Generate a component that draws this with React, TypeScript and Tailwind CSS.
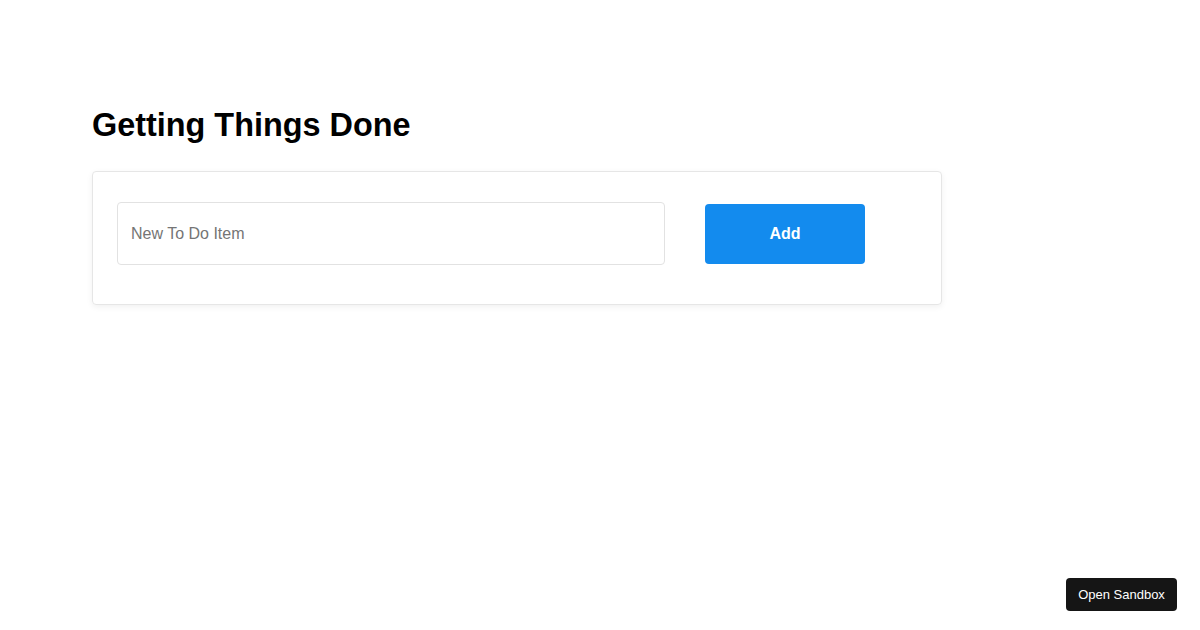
import React, { useState } from 'react';

export default function App() {
  const [item, setItem] = useState('');

  return (
    <div className="min-h-screen w-[1200px] h-[630px] bg-white relative" style={{ fontFamily: '"Liberation Sans", Arial, sans-serif' }}>
      <div className="pt-[104px] pl-[92px]">
        <h1 className="text-[32.4px] leading-[42px] font-bold text-black">Getting Things Done</h1>

        {/* card */}
        <div className="mt-[25px] w-[850px] h-[134px] border border-[#e6e6e6] rounded-[4px] shadow-[0_2px_6px_rgba(0,0,0,0.06)] pl-[24px] pt-[30px] flex items-start">
          <input
            value={item}
            onChange={(e) => setItem(e.target.value)}
            placeholder="New To Do Item"
            className="w-[548px] h-[63px] border border-[#e2e2e2] rounded-[4px] px-[13px] text-[16px] text-black placeholder:text-[#757575] outline-none"
          />
          <button className="ml-[40px] mt-[2px] w-[160px] h-[60px] bg-[#138bee] rounded-[4px] text-white text-[16px] font-bold">
            Add
          </button>
        </div>
      </div>

      <button className="absolute right-[23px] bottom-[19px] w-[111px] h-[33px] bg-[#151515] rounded-[4px] text-white text-[13px] leading-none">
        Open Sandbox
      </button>
    </div>
  );
}
